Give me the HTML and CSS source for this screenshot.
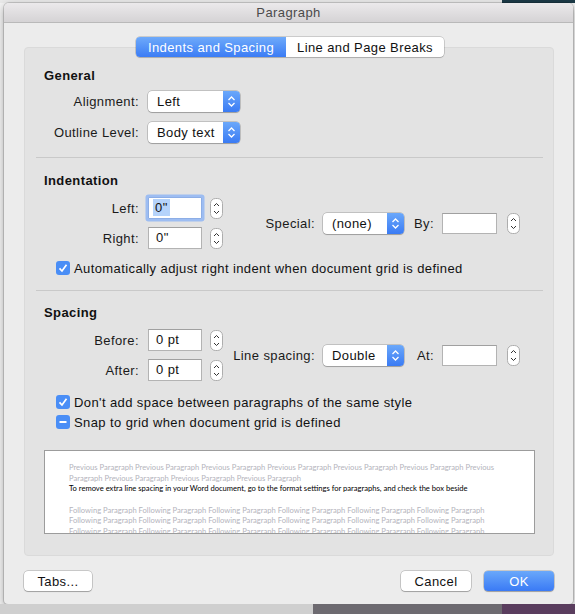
FILE: index.html
```html
<!DOCTYPE html>
<html>
<head>
<meta charset="utf-8">
<title>Paragraph</title>
<link rel="stylesheet" href="styles.css">
</head>
<body>
<div class="topstrip"></div>
<div class="desk">
  <div class="window">
    <div class="titlebar">Paragraph</div>
    <div class="wbody">
      <div class="tabs">
        <span class="tab active">Indents and Spacing</span>
        <span class="tab">Line and Page Breaks</span>
      </div>
      <div class="panel">
        <section class="sec">
          <h2>General</h2>
          <div class="row r-first">
            <label class="lbl">Alignment:</label>
            <div class="popup w92"><span class="ptext">Left</span><span class="parrow"><svg width="17" height="21" viewBox="0 0 17 21"><path d="M5.5 9 L8.5 6 L11.5 9 M5.5 12 L8.5 15 L11.5 12" fill="none" stroke="#fff" stroke-width="1.3"/></svg></span></div>
          </div>
          <div class="row r-next">
            <label class="lbl">Outline Level:</label>
            <div class="popup w92"><span class="ptext">Body text</span><span class="parrow"><svg width="17" height="21" viewBox="0 0 17 21"><path d="M5.5 9 L8.5 6 L11.5 9 M5.5 12 L8.5 15 L11.5 12" fill="none" stroke="#fff" stroke-width="1.3"/></svg></span></div>
          </div>
        </section>
        <div class="sep sep1"></div>
        <section class="sec">
          <h2 class="h-after-sep">Indentation</h2>
          <div class="block">
            <div class="pair">
              <div class="frow">
                <label class="lbl">Left:</label>
                <div class="field focused"><span class="sel">0"</span></div>
                <span class="stepper"><svg width="13" height="21" viewBox="0 0 13 21"><rect x="0.5" y="0.5" width="12" height="20" rx="5" fill="#fff" stroke="#adadad"/><path d="M4 8 L6.5 5.5 L9 8 M4 13 L6.5 15.5 L9 13" fill="none" stroke="#333" stroke-width="1"/></svg></span>
              </div>
              <div class="frow">
                <label class="lbl">Right:</label>
                <div class="field">0"</div>
                <span class="stepper"><svg width="13" height="21" viewBox="0 0 13 21"><rect x="0.5" y="0.5" width="12" height="20" rx="5" fill="#fff" stroke="#adadad"/><path d="M4 8 L6.5 5.5 L9 8 M4 13 L6.5 15.5 L9 13" fill="none" stroke="#333" stroke-width="1"/></svg></span>
              </div>
            </div>
            <div class="side">
              <label class="slbl">Special:</label>
              <div class="popup w81"><span class="ptext">(none)</span><span class="parrow"><svg width="17" height="21" viewBox="0 0 17 21"><path d="M5.5 9 L8.5 6 L11.5 9 M5.5 12 L8.5 15 L11.5 12" fill="none" stroke="#fff" stroke-width="1.3"/></svg></span></div>
              <label class="blbl">By:</label>
              <div class="field w55"></div>
              <span class="stepper s2"><svg width="13" height="21" viewBox="0 0 13 21"><rect x="0.5" y="0.5" width="12" height="20" rx="5" fill="#fff" stroke="#adadad"/><path d="M4 8 L6.5 5.5 L9 8 M4 13 L6.5 15.5 L9 13" fill="none" stroke="#333" stroke-width="1"/></svg></span>
            </div>
          </div>
          <div class="check c-first">
            <span class="box"><svg width="14" height="14" viewBox="0 0 14 14"><rect x="0" y="0" width="14" height="14" rx="3" fill="#4a8ef6"/><path d="M3.5 7.3 L6 10 L10.5 3.8" fill="none" stroke="#fff" stroke-width="1.7"/></svg></span>
            <span>Automatically adjust right indent when document grid is defined</span>
          </div>
        </section>
        <div class="sep sep2"></div>
        <section class="sec">
          <h2 class="h-after-sep2">Spacing</h2>
          <div class="block">
            <div class="pair">
              <div class="frow">
                <label class="lbl">Before:</label>
                <div class="field">0 pt</div>
                <span class="stepper"><svg width="13" height="21" viewBox="0 0 13 21"><rect x="0.5" y="0.5" width="12" height="20" rx="5" fill="#fff" stroke="#adadad"/><path d="M4 8 L6.5 5.5 L9 8 M4 13 L6.5 15.5 L9 13" fill="none" stroke="#333" stroke-width="1"/></svg></span>
              </div>
              <div class="frow">
                <label class="lbl">After:</label>
                <div class="field">0 pt</div>
                <span class="stepper"><svg width="13" height="21" viewBox="0 0 13 21"><rect x="0.5" y="0.5" width="12" height="20" rx="5" fill="#fff" stroke="#adadad"/><path d="M4 8 L6.5 5.5 L9 8 M4 13 L6.5 15.5 L9 13" fill="none" stroke="#333" stroke-width="1"/></svg></span>
              </div>
            </div>
            <div class="side">
              <label class="slbl">Line spacing:</label>
              <div class="popup w81"><span class="ptext">Double</span><span class="parrow"><svg width="17" height="21" viewBox="0 0 17 21"><path d="M5.5 9 L8.5 6 L11.5 9 M5.5 12 L8.5 15 L11.5 12" fill="none" stroke="#fff" stroke-width="1.3"/></svg></span></div>
              <label class="blbl">At:</label>
              <div class="field w55"></div>
              <span class="stepper s2"><svg width="13" height="21" viewBox="0 0 13 21"><rect x="0.5" y="0.5" width="12" height="20" rx="5" fill="#fff" stroke="#adadad"/><path d="M4 8 L6.5 5.5 L9 8 M4 13 L6.5 15.5 L9 13" fill="none" stroke="#333" stroke-width="1"/></svg></span>
            </div>
          </div>
          <div class="check c-second">
            <span class="box"><svg width="14" height="14" viewBox="0 0 14 14"><rect x="0" y="0" width="14" height="14" rx="3" fill="#4a8ef6"/><path d="M3.5 7.3 L6 10 L10.5 3.8" fill="none" stroke="#fff" stroke-width="1.7"/></svg></span>
            <span>Don't add space between paragraphs of the same style</span>
          </div>
          <div class="check c-third">
            <span class="box"><svg width="14" height="14" viewBox="0 0 14 14"><rect x="0" y="0" width="14" height="14" rx="3" fill="#4a8ef6"/><path d="M3.5 7 H10.5" fill="none" stroke="#fff" stroke-width="2"/></svg></span>
            <span>Snap to grid when document grid is defined</span>
          </div>
          <div class="preview">
            <div class="pl grey">Previous Paragraph Previous Paragraph Previous Paragraph Previous Paragraph Previous Paragraph Previous Paragraph Previous</div>
            <div class="pl grey">Paragraph Previous Paragraph Previous Paragraph Previous Paragraph</div>
            <div class="pl">To remove extra line spacing in your Word document, go to the format settings for paragraphs, and check the box beside</div>
            <div class="pl blank"></div>
            <div class="pl grey">Following Paragraph Following Paragraph Following Paragraph Following Paragraph Following Paragraph Following Paragraph</div>
            <div class="pl grey">Following Paragraph Following Paragraph Following Paragraph Following Paragraph Following Paragraph Following Paragraph</div>
            <div class="pl grey">Following Paragraph Following Paragraph Following Paragraph Following Paragraph Following Paragraph Following Paragraph</div>
          </div>
        </section>
      </div>
      <div class="buttons">
        <button class="btn tabsbtn">Tabs...</button>
        <span class="spacer"></span>
        <button class="btn cancel">Cancel</button>
        <button class="btn ok">OK</button>
      </div>
    </div>
  </div>
</div>
<div class="bottomstrip"></div>
</body>
</html>
```
FILE: styles.css
```css
html, body {
  margin: 0;
  padding: 0;
}
body {
  width: 575px;
  height: 614px;
  overflow: hidden;
  background: #f3f3f3;
  font-family: "Liberation Sans", Arial, sans-serif;
  font-size: 13px;
  letter-spacing: 0.4px;
  color: #1a1a1a;
}
.topstrip {
  height: 3px;
  background: linear-gradient(90deg, #e9e9e9 0, #e9e9e9 502px, #1c3a47 502px);
}
.desk {
  padding-left: 4px;
}
.window {
  width: 569px;
  height: 601px;
  background: #ececec;
  border-radius: 5px 5px 4px 4px;
  box-shadow: 0 0 0 1px rgba(0,0,0,0.14), 0 3px 8px rgba(0,0,0,0.35);
  overflow: hidden;
}
.titlebar {
  height: 19px;
  line-height: 20px;
  text-align: center;
  color: #4b4b4b;
  font-size: 13px;
  background: linear-gradient(#ebe9eb, #d5d3d5);
  border-bottom: 1px solid #b9b9b9;
}
.wbody {
  display: flex;
  flex-direction: column;
}
.tabs {
  display: flex;
  align-self: center;
  margin-top: 14px;
  margin-bottom: -10px;
  margin-left: 3px;
  height: 20px;
  position: relative;
  z-index: 1;
  border-radius: 4px;
  box-shadow: 0 0 0 0.5px rgba(0,0,0,0.28), 0 1px 1px rgba(0,0,0,0.12);
  background: #fff;
  overflow: hidden;
}
.tab {
  display: flex;
  align-items: center;
  justify-content: center;
  height: 20px;
  width: 158px;
  color: #111;
}
.tab.active {
  width: 150px;
  color: #fff;
  background: linear-gradient(#6eaafa, #3b7cf5);
}
.panel {
  box-sizing: border-box;
  margin-left: 20px;
  width: 530px;
  height: 509px;
  background: #e3e3e3;
  border: 1px solid #dadada;
  border-radius: 4px;
}
.sec {
  padding-left: 19px;
}
h2 {
  margin: 20px 0 0 0;
  font-size: 13px;
  line-height: 16px;
  font-weight: bold;
  color: #111;
}
h2.h-after-sep {
  margin-top: 15px;
}
h2.h-after-sep2 {
  margin-top: 14px;
}
.row {
  display: flex;
  align-items: center;
  height: 21px;
}
.r-first { margin-top: 7px; }
.r-next { margin-top: 10px; }
.lbl {
  width: 95px;
  margin-right: 9px;
  text-align: right;
  flex: none;
}
.popup {
  box-sizing: border-box;
  display: flex;
  height: 21px;
  background: #fff;
  border-radius: 4px;
  box-shadow: 0 0 0 0.5px rgba(0,0,0,0.3), 0 1px 1px rgba(0,0,0,0.18);
  overflow: hidden;
}
.w92 { width: 92px; }
.w81 { width: 81px; }
.ptext {
  flex: 1;
  padding-left: 9px;
  line-height: 21px;
  white-space: nowrap;
  color: #111;
}
.parrow {
  width: 17px;
  height: 21px;
  background: linear-gradient(#6ba8fa, #3a7bf4);
  display: flex;
}
.sep {
  height: 1px;
  background: #c9c9c9;
  margin: 0 10px 0 11px;
}
.sep1 { margin-top: 14px; }
.sep2 { margin-top: 14px; }
.block {
  display: flex;
  align-items: center;
  margin-top: 8px;
}
.pair {
  display: flex;
  flex-direction: column;
  gap: 8px;
}
.frow {
  display: flex;
  align-items: center;
  height: 22px;
}
.field {
  box-sizing: border-box;
  width: 54px;
  height: 22px;
  background: #fff;
  border: 1px solid #b3b3b3;
  border-top-color: #a0a0a0;
  padding-left: 7px;
  line-height: 20px;
  color: #111;
}
.field.w55 {
  width: 55px;
  height: 21px;
}
.field.focused {
  border-color: #8daee6;
  border-radius: 1px;
  box-shadow: 0 0 0 2.5px #9dbdf2;
  padding-left: 4px;
}
.sel {
  background: #b5d3fb;
  padding: 1px 2px;
}
.stepper {
  display: flex;
  margin-left: 8px;
}
.stepper.s2 {
  margin-left: 10px;
}
.side {
  display: flex;
  align-items: center;
}
.slbl {
  width: 92px;
  margin-right: 8px;
  text-align: right;
}
.blbl {
  width: 20px;
  margin-left: 10px;
  margin-right: 8px;
  text-align: right;
}
.check {
  display: flex;
  align-items: center;
  height: 16px;
  padding-left: 12px;
  gap: 4px;
  color: #111;
}
.box {
  display: flex;
  width: 14px;
  height: 14px;
}
.c-first { margin-top: 11px; }
.c-second { margin-top: 13px; }
.c-third { margin-top: 4px; }
.preview {
  box-sizing: border-box;
  margin-top: 20px;
  width: 491px;
  height: 84px;
  background: #fff;
  border: 1px solid #9c9c9c;
  padding: 11px 0 0 24px;
  overflow: hidden;
  font-family: Lato, "Open Sans", sans-serif;
  font-size: 7.6px;
  letter-spacing: 0;
  line-height: 10.7px;
  color: #000;
}
.pl {
  white-space: nowrap;
  height: 10.7px;
}
.pl.grey {
  color: #b4b4bc;
}
.buttons {
  display: flex;
  margin: 15px 0 0 20px;
  width: 530px;
}
.spacer { flex: 1; }
.btn {
  box-sizing: border-box;
  height: 20px;
  font-family: "Liberation Sans", Arial, sans-serif;
  font-size: 13px;
  letter-spacing: 0.4px;
  color: #111;
  background: #fff;
  border: none;
  border-radius: 4px;
  box-shadow: 0 0 0 0.5px rgba(0,0,0,0.3), 0 1px 1px rgba(0,0,0,0.2);
  padding: 0;
}
.tabsbtn { width: 68px; }
.cancel { width: 70px; margin-right: 13px; }
.ok {
  width: 70px;
  color: #fff;
  background: linear-gradient(#6aa8fa, #3a7af5);
}
.bottomstrip {
  height: 10px;
  background: linear-gradient(90deg, #cfcfcf 0, #cfcfcf 313px, #6d6a70 313px, #6d6a70 502px, #5a3d5e 502px);
}
```
